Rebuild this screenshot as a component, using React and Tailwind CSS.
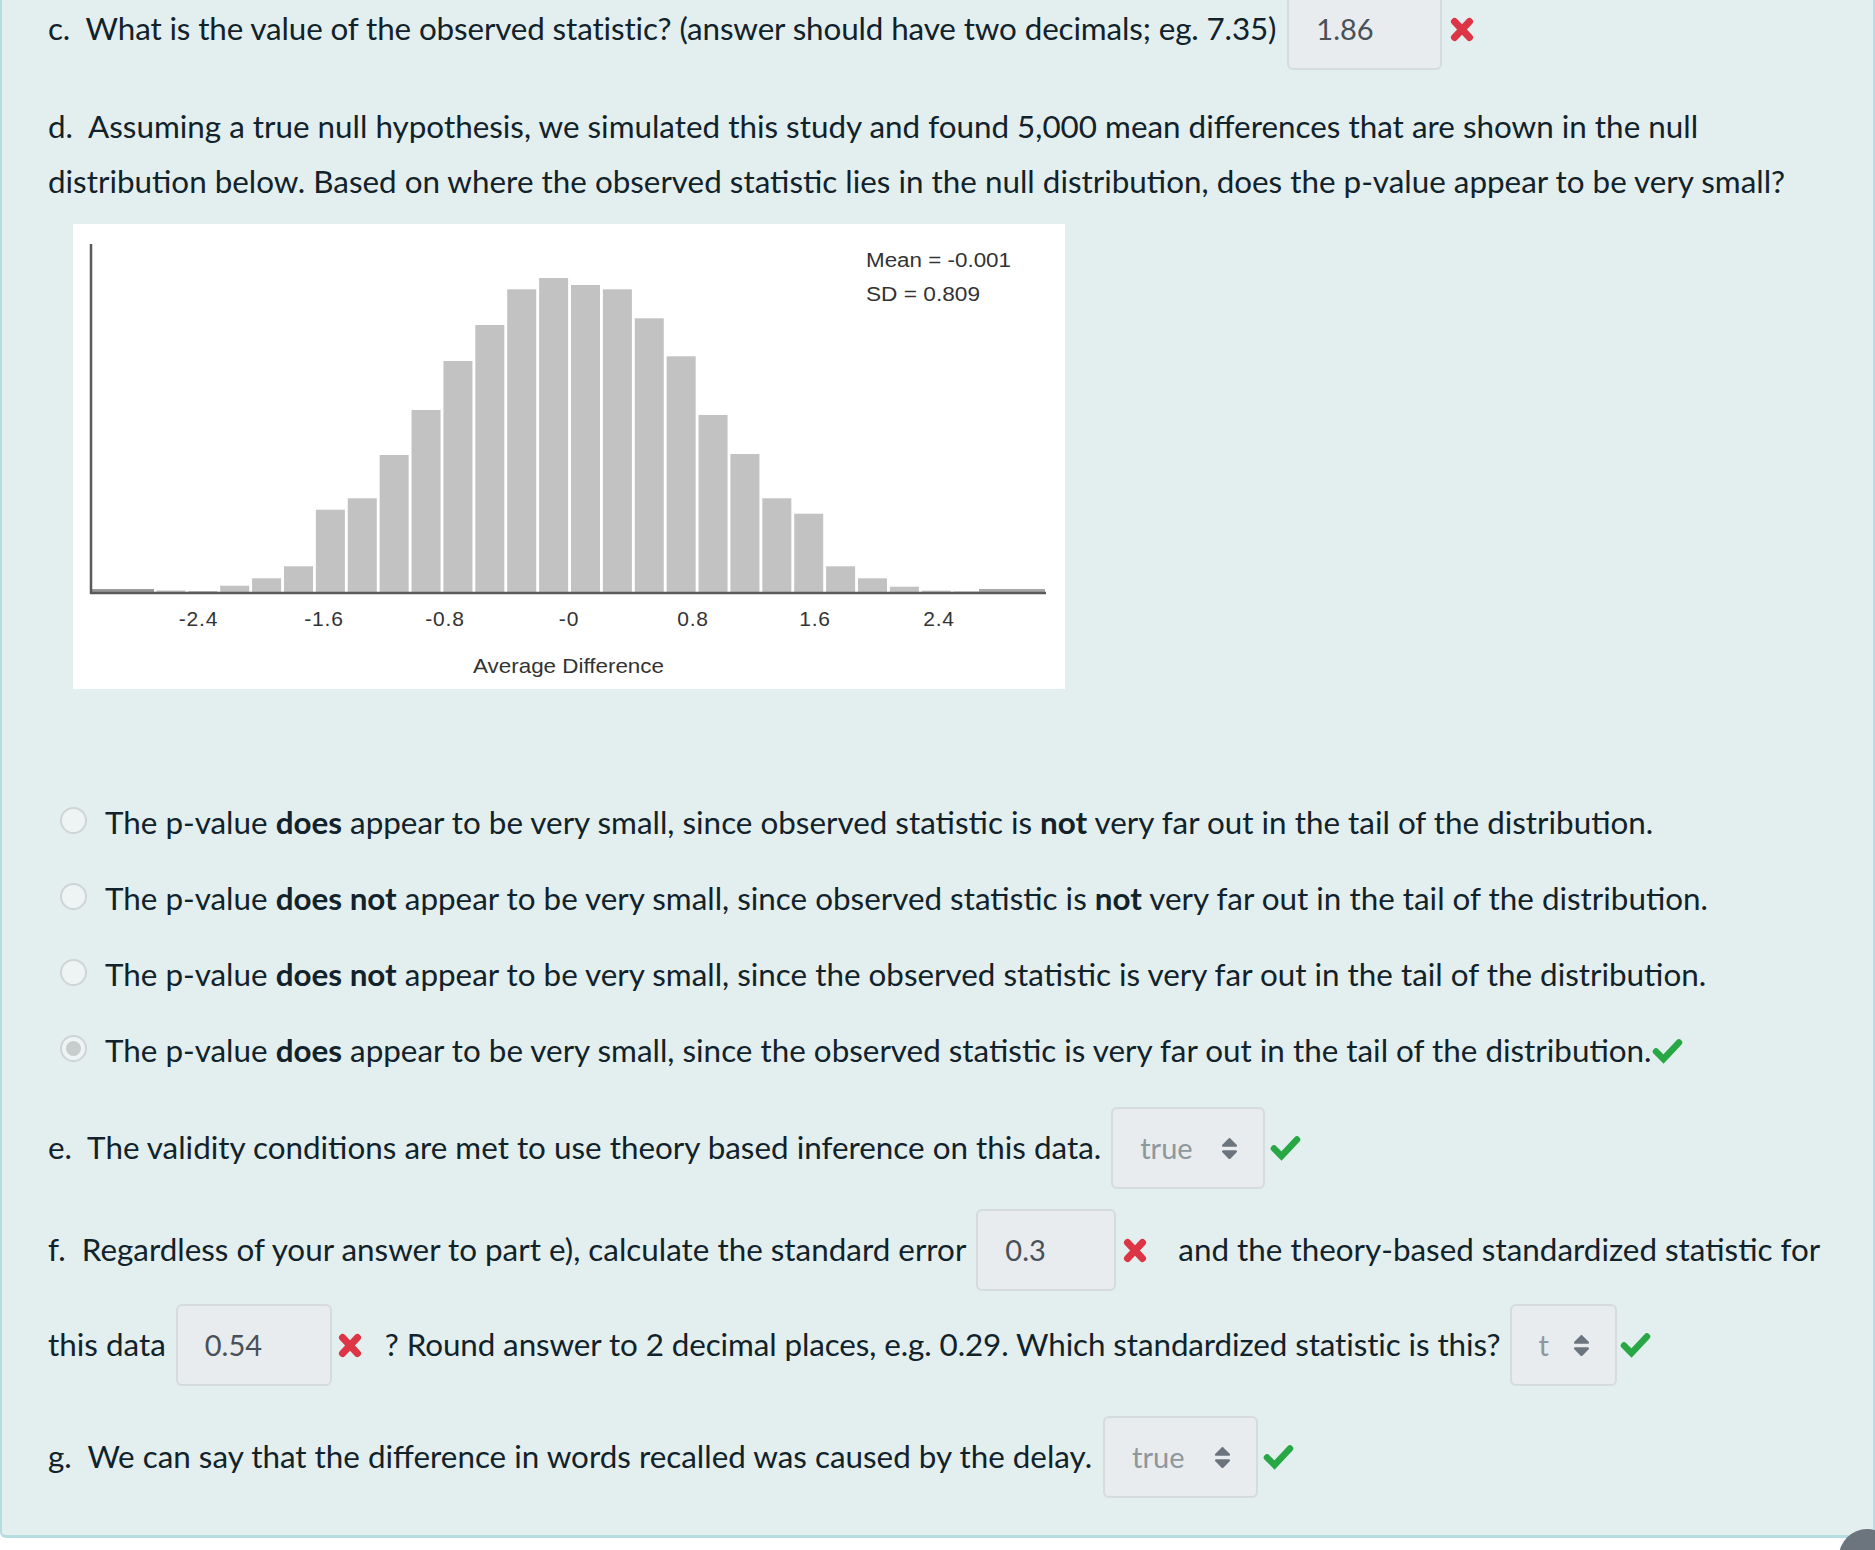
import { FaSort } from "react-icons/fa";

const bars = [
  [-12, 1.5], [-11, 1], [-10, 6.3], [-9, 13.7], [-8, 25.7], [-7, 82.3], [-6, 93.7],
  [-5, 137], [-4, 182], [-3, 231], [-2, 267], [-1, 302.7], [0, 314], [1, 307],
  [2, 302.7], [3, 273.7], [4, 235.7], [5, 177], [6, 138], [7, 93.7], [8, 78.3],
  [9, 25.7], [10, 13.7], [11, 5.3], [12, 1.3], [13, 0.6],
];

const ticks = [
  ["-2.4", 125.5], ["-1.6", 251], ["-0.8", 372], ["-0", 496],
  ["0.8", 620], ["1.6", 742], ["2.4", 866],
];

const Histogram = () => (
  <div className="ml-[25px] mt-[15px] w-[992px] h-[465px] bg-white">
    <svg width="992" height="465" viewBox="0 0 992 465" fontFamily="'Liberation Sans', Arial, sans-serif">
      {bars.map(([j, h]) => (
        <rect key={j} x={466.1 + 31.89 * j} y={368 - h} width="29" height={h} fill="#c2c2c2" />
      ))}
      <rect x="19" y="365" width="62" height="3" fill="#9a9a9a" />
      <rect x="906" y="365" width="66" height="3" fill="#a8a8a8" />
      <line x1="18" y1="20" x2="18" y2="370" stroke="#5a5a5a" strokeWidth="2.5" />
      <line x1="17" y1="369" x2="973" y2="369" stroke="#5a5a5a" strokeWidth="2.5" />
      {ticks.map(([t, x]) => (
        <text key={t} x={x} y="402" fontSize="21" letterSpacing="0.8" fill="#333" textAnchor="middle">{t}</text>
      ))}
      <text x="400" y="449" fontSize="21" fill="#333" textLength="191" lengthAdjust="spacingAndGlyphs">Average Difference</text>
      <text x="793" y="43" fontSize="20" fill="#333" textLength="145" lengthAdjust="spacingAndGlyphs">Mean = -0.001</text>
      <text x="793" y="77" fontSize="20" fill="#333" textLength="114" lengthAdjust="spacingAndGlyphs">SD = 0.809</text>
    </svg>
  </div>
);

const Wrong = ({ className = "" }) => (
  <svg viewBox="0 0 24 25" className={`w-[24px] h-[25px] shrink-0 ${className}`}>
    <path d="M4.5 4.5 L19.5 20.5 M19.5 4.5 L4.5 20.5" stroke="#dc3545" strokeWidth="7" strokeLinecap="round" fill="none" />
  </svg>
);

const Right = ({ className = "" }) => (
  <svg viewBox="0 0 31 26" className={`w-[31px] h-[26px] shrink-0 ${className}`}>
    <path d="M4 13.5 L11.5 21 L27 4.5" stroke="#28a745" strokeWidth="6.5" strokeLinecap="round" strokeLinejoin="miter" fill="none" />
  </svg>
);

const Box = ({ className = "", children }) => (
  <div className={`h-[82px] shrink-0 rounded-[6px] border-2 border-[#d6dbdd] bg-[#e8ecee] flex items-center pl-[27px] text-[29px] text-[#495057] ${className}`}>
    {children}
  </div>
);

const Select = ({ className = "", value }) => (
  <Box className={`justify-between pr-[24px] !text-[#8e979c] ${className}`}>
    <span>{value}</span>
    <FaSort className="text-[#6c757d] w-[19px] h-[27px]" />
  </Box>
);

const Radio = ({ checked }) => (
  <span className="w-[27px] h-[27px] shrink-0 rounded-full border-2 border-[#cfd4d5] bg-[#eef3f3] flex items-center justify-center -mt-[6px]">
    {checked && <span className="w-[15px] h-[15px] rounded-full bg-[#c9cccd]" />}
  </span>
);

const options = [
  [<>The p-value <b>does</b> appear to be very small, since observed statistic is <b>not</b> very far out in the tail of the distribution.</>, false],
  [<>The p-value <b>does not</b> appear to be very small, since observed statistic is <b>not</b> very far out in the tail of the distribution.</>, false],
  [<>The p-value <b>does not</b> appear to be very small, since the observed statistic is very far out in the tail of the distribution.</>, false],
  [<>The p-value <b>does</b> appear to be very small, since the observed statistic is very far out in the tail of the distribution.</>, true],
];

export default function App() {
  return (
    <div className="relative w-[1875px] h-[1550px] overflow-hidden bg-white font-['Lato','Noto_Sans',sans-serif] text-[31.4px] text-[#11222a]">
      <div className="h-[1550px] bg-[#e3eeee] border-x-2 border-b-[3px] border-[#b5dde2] rounded-b-[6px] pl-[46px]">
        {/* c */}
        <div className="flex items-center -mt-[12px] h-[82px]">
          <span className="tracking-[-0.13px]">c.&nbsp; What is the value of the observed statistic? (answer should have two decimals; eg. 7.35)</span>
          <Box className="ml-[11px] w-[155px]">1.86</Box>
          <Wrong className="ml-[8px]" />
        </div>

        {/* d */}
        <p className="mt-[29px] leading-[55px] whitespace-nowrap">
          d.&nbsp; Assuming a true null hypothesis, we simulated this study and found 5,000 mean differences that are shown in the null
          <br />
          distribution below. Based on where the observed statistic lies in the null distribution, does the p-value appear to be very small?
        </p>
        <Histogram />

        <div className="mt-[96px] ml-[12px]">
          {options.map(([label, checked], i) => (
            <div key={i} className="h-[76px] flex items-center gap-[18px]">
              <Radio checked={checked} />
              <span className="flex items-center">
                <span>{label}</span>
                {checked && <Right className="ml-[1px]" />}
              </span>
            </div>
          ))}
        </div>

        {/* e */}
        <div className="flex items-center mt-[18px] h-[82px]">
          <span>e.&nbsp; The validity conditions are met to use theory based inference on this data.</span>
          <Select className="ml-[10px] w-[154px]" value="true" />
          <Right className="ml-[5px]" />
        </div>

        {/* f */}
        <div className="flex items-center mt-[20px] h-[82px]">
          <span>f.&nbsp; Regardless of your answer to part e), calculate the standard error</span>
          <Box className="ml-[10px] w-[140px]">0.3</Box>
          <Wrong className="ml-[7px]" />
          <span className="ml-[31px]">and the theory-based standardized statistic for</span>
        </div>
        <div className="flex items-center mt-[13px] h-[82px]">
          <span>this data</span>
          <Box className="ml-[10px] w-[156px]">0.54</Box>
          <Wrong className="ml-[6px]" />
          <span className="ml-[23px] tracking-[-0.1px]">? Round answer to 2 decimal places, e.g. 0.29. Which standardized statistic is this?</span>
          <Select className="ml-[9px] w-[107px]" value="t" />
          <Right className="ml-[3px]" />
        </div>

        {/* g */}
        <div className="flex items-center mt-[30px] h-[82px]">
          <span>g.&nbsp; We can say that the difference in words recalled was caused by the delay.</span>
          <Select className="ml-[11px] w-[155px]" value="true" />
          <Right className="ml-[5px]" />
        </div>
      </div>
      <div className="absolute left-[1839px] top-[1529px] w-[56px] h-[56px] rounded-full bg-[#6c757d]" />
    </div>
  );
}
